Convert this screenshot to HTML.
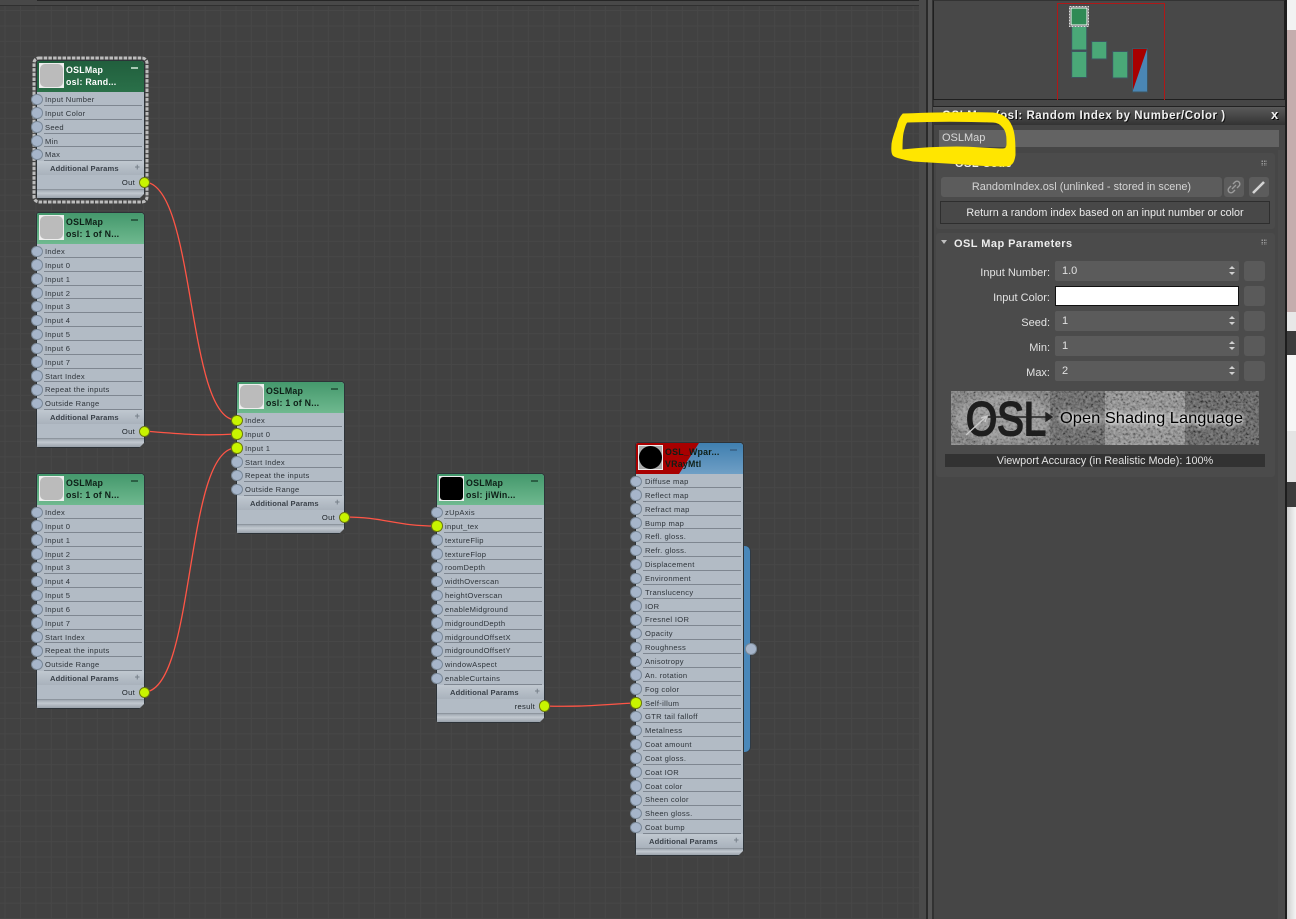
<!DOCTYPE html>
<html lang="en">
<head>
<meta charset="utf-8">
<title>OSLMap Slate Editor</title>
<style>
html,body{margin:0;padding:0;background:#414141}
body{width:1296px;height:919px;overflow:hidden;position:relative;font-family:"Liberation Sans",sans-serif}
.a{position:absolute}
#grid{left:0;top:6px;width:919px;height:913px;background-color:#414141;background-image:linear-gradient(90deg,#474747 1px,transparent 1px),linear-gradient(#474747 1px,transparent 1px);background-size:15.4px 15.4px;background-position:4.6px 4px}
.n{position:absolute;width:107px;background:#b2bbc5;box-shadow:0 0 0 1px #2d3338;border-radius:2px 3px 0 3px;font-size:7.6px;letter-spacing:.3px;color:#2f353b}
.h{height:31px;position:relative;background:linear-gradient(#44986c,#6fb98f);color:#0e1f17;font-weight:bold;font-size:8.8px;line-height:13px;letter-spacing:.25px;border-radius:2px 3px 0 0;overflow:hidden}
.h b{position:absolute;left:29px;top:3px;white-space:nowrap}
.h u{position:absolute;left:29px;top:15px;text-decoration:none;white-space:nowrap}
.h em{position:absolute;right:6px;top:6px;width:7px;height:2px;background:#2b5f44}
.sw{position:absolute;left:2px;top:2px;width:25px;height:25px;background:#eee}
.sw::after{content:"";position:absolute;left:1px;top:1px;right:1px;bottom:1px;border-radius:5px;background:#bbb}
.bk::after{background:#000;border-radius:3px}
.ci{background:#aaa;box-shadow:inset 0 0 0 1px #eee}
.ci::after{background:#000;border-radius:50%}
.r{height:13.85px;line-height:15.4px;position:relative;padding-left:8px;white-space:nowrap;box-sizing:border-box}
.r::after{content:"";position:absolute;left:7px;right:2px;bottom:0;height:1px;background:#7e8690}
.r::before{content:"";position:absolute;left:-6px;top:1.6px;width:9.5px;height:9.5px;border-radius:50%;background:#a6b5ca;border:1px solid #7a8897}
.y::before{background:#c8f400;border-color:#6a7610}
.ad{height:13.85px;line-height:15px;background:linear-gradient(#c0c8d0,#a9b2bc);font-weight:bold;letter-spacing:.12px;padding-left:13px;box-sizing:border-box;position:relative;color:#3a4149}
.ad::after{content:"+";position:absolute;right:4px;top:-1px;color:#77808a;font-size:9px}
.o{height:13.85px;line-height:15.4px;text-align:right;padding-right:9px;position:relative;box-sizing:border-box;color:#20262b}
.o::after{content:"";position:absolute;right:-6px;top:1.6px;width:9.5px;height:9.5px;border-radius:50%;background:#c8f400;border:1px solid #6a7610}
.f{background:linear-gradient(#a0a8b1 0,#c2c9d0 40%,#9aa2ab 100%);border-top:1px solid #8d959e;box-sizing:border-box;position:relative}
.f::after{content:"";position:absolute;right:-1px;bottom:-1px;border-style:solid;border-width:0 0 6px 6px;border-color:transparent transparent #414141 transparent}
.k{position:absolute;background:#5c5c5c;border-radius:3px}
.lb{position:absolute;right:246px;color:#e2e2e2;font-size:11px;line-height:20px;white-space:nowrap}
.in{position:absolute;left:1055px;width:184px;height:20px;background:#5b5b5b;border-radius:2px;color:#e0e0e0;font-size:11px;line-height:21px;padding-left:7px;box-sizing:border-box}
.in::after{content:"";position:absolute;right:4px;top:5px;border:3px solid transparent;border-bottom:3px solid #d0d0d0;border-top:0}
.in::before{content:"";position:absolute;right:4px;top:11px;border:3px solid transparent;border-top:3px solid #d0d0d0;border-bottom:0}
.bt{position:absolute;left:1244px;width:21px;height:20px;background:#5a5a5a;border-radius:3px}
.rl{position:absolute;left:936px;width:339px;background:#4b4b4b;border-radius:3px}
.dots{position:absolute;width:6px;height:6px;background-image:radial-gradient(#999 .7px,transparent .8px);background-size:2.5px 2.5px}
</style>
</head>
<body>
<div class="a" style="left:0;top:0;width:919px;height:5px;background:#484848"></div>
<div class="a" style="left:37px;top:0;width:882px;height:1px;background:#262626"></div>
<div class="a" style="left:0;top:5px;width:919px;height:1px;background:#303030"></div>
<div id="grid" class="a"></div>

<svg class="a" style="left:0;top:0" width="919" height="919" fill="none" stroke="#ff5546" stroke-width="1.3">
<path d="M144 182C196 182 186 420 236 420"/>
<path d="M144 431C180 434 200 436 236 434"/>
<path d="M144 692C196 692 184 448 236 448"/>
<path d="M344 517C385 517 395 526 436 526"/>
<path d="M544 706C585 707 595 705 635 703"/>
</svg>

<div class="a" style="left:743px;top:546px;width:7px;height:206px;background:#4a88ba;border-radius:0 5px 5px 0;box-shadow:1px 0 0 #2f3a44"></div>
<div class="a" style="left:745px;top:643px;width:9.5px;height:9.5px;border-radius:50%;background:#a6b5ca;border:1px solid #7a8897"></div>

<svg class="a" style="left:30px;top:54px" width="122" height="152" fill="none">
<rect x="4" y="4" width="113" height="144" rx="5" stroke="#bdbdbd" stroke-width="3" stroke-dasharray="3.5 1.2"/>
</svg>
<div class="n" style="left:37px;top:61px">
<div class="h" style="background:linear-gradient(#215f3d,#2a7049);color:#fff"><i class="sw"></i><b>OSLMap</b><u>osl: Rand...</u><em style="background:#a8c8b4"></em></div>
<div class="r">Input Number</div><div class="r">Input Color</div><div class="r">Seed</div><div class="r">Min</div><div class="r">Max</div>
<div class="ad">Additional Params</div><div class="o">Out</div><div class="f" style="height:9px"></div>
</div>

<div class="n" style="left:37px;top:213px">
<div class="h"><i class="sw"></i><b>OSLMap</b><u>osl: 1 of N...</u><em></em></div>
<div class="r">Index</div><div class="r">Input 0</div><div class="r">Input 1</div><div class="r">Input 2</div><div class="r">Input 3</div><div class="r">Input 4</div><div class="r">Input 5</div><div class="r">Input 6</div><div class="r">Input 7</div><div class="r">Start Index</div><div class="r">Repeat the inputs</div><div class="r">Outside Range</div>
<div class="ad">Additional Params</div><div class="o">Out</div><div class="f" style="height:9px"></div>
</div>

<div class="n" style="left:37px;top:474px">
<div class="h"><i class="sw"></i><b>OSLMap</b><u>osl: 1 of N...</u><em></em></div>
<div class="r">Index</div><div class="r">Input 0</div><div class="r">Input 1</div><div class="r">Input 2</div><div class="r">Input 3</div><div class="r">Input 4</div><div class="r">Input 5</div><div class="r">Input 6</div><div class="r">Input 7</div><div class="r">Start Index</div><div class="r">Repeat the inputs</div><div class="r">Outside Range</div>
<div class="ad">Additional Params</div><div class="o">Out</div><div class="f" style="height:9px"></div>
</div>

<div class="n" style="left:237px;top:382px">
<div class="h"><i class="sw"></i><b>OSLMap</b><u>osl: 1 of N...</u><em></em></div>
<div class="r y">Index</div><div class="r y">Input 0</div><div class="r y">Input 1</div><div class="r">Start Index</div><div class="r">Repeat the inputs</div><div class="r">Outside Range</div>
<div class="ad">Additional Params</div><div class="o">Out</div><div class="f" style="height:9px"></div>
</div>

<div class="n" style="left:437px;top:474px">
<div class="h"><i class="sw bk"></i><b>OSLMap</b><u>osl: jiWin...</u><em></em></div>
<div class="r">zUpAxis</div><div class="r y">input_tex</div><div class="r">textureFlip</div><div class="r">textureFlop</div><div class="r">roomDepth</div><div class="r">widthOverscan</div><div class="r">heightOverscan</div><div class="r">enableMidground</div><div class="r">midgroundDepth</div><div class="r">midgroundOffsetX</div><div class="r">midgroundOffsetY</div><div class="r">windowAspect</div><div class="r">enableCurtains</div>
<div class="ad">Additional Params</div><div class="o">result</div><div class="f" style="height:9px"></div>
</div>

<div class="n" style="left:636px;top:443px">
<div class="h" style="background:linear-gradient(#3f7fb0,#6f9fc5)">
<svg class="a" style="left:0;top:0" width="66" height="31"><polygon points="0,0 63,0 43,31 0,31" fill="#a80000"/></svg>
<i class="sw ci"></i><b>OSL_Wpar...</b><u>VRayMtl</u><em style="background:#3d6a90"></em></div>
<div class="r" style="padding-left:9px">Diffuse map</div><div class="r" style="padding-left:9px">Reflect map</div><div class="r" style="padding-left:9px">Refract map</div><div class="r" style="padding-left:9px">Bump map</div><div class="r" style="padding-left:9px">Refl. gloss.</div><div class="r" style="padding-left:9px">Refr. gloss.</div><div class="r" style="padding-left:9px">Displacement</div><div class="r" style="padding-left:9px">Environment</div><div class="r" style="padding-left:9px">Translucency</div><div class="r" style="padding-left:9px">IOR</div><div class="r" style="padding-left:9px">Fresnel IOR</div><div class="r" style="padding-left:9px">Opacity</div><div class="r" style="padding-left:9px">Roughness</div><div class="r" style="padding-left:9px">Anisotropy</div><div class="r" style="padding-left:9px">An. rotation</div><div class="r" style="padding-left:9px">Fog color</div><div class="r y" style="padding-left:9px">Self-illum</div><div class="r" style="padding-left:9px">GTR tail falloff</div><div class="r" style="padding-left:9px">Metalness</div><div class="r" style="padding-left:9px">Coat amount</div><div class="r" style="padding-left:9px">Coat gloss.</div><div class="r" style="padding-left:9px">Coat IOR</div><div class="r" style="padding-left:9px">Coat color</div><div class="r" style="padding-left:9px">Sheen color</div><div class="r" style="padding-left:9px">Sheen gloss.</div><div class="r" style="padding-left:9px">Coat bump</div>
<div class="ad">Additional Params</div><div class="f" style="height:7px"></div>
</div>

<!-- divider band -->
<div class="a" style="left:919px;top:0;width:7px;height:919px;background:#4a4a4a"></div>
<div class="a" style="left:926px;top:0;width:2px;height:919px;background:#2a2a2a"></div>
<div class="a" style="left:928px;top:0;width:4px;height:919px;background:#565656"></div>
<div class="a" style="left:932px;top:0;width:2px;height:919px;background:#323232"></div>

<!-- right panel -->
<div class="a" style="left:934px;top:0;width:353px;height:919px;background:#464646"></div>
<div class="a" style="left:1278px;top:150px;width:7px;height:769px;background:#4a4a4a"></div>
<div class="a" style="left:1285px;top:0;width:2px;height:919px;background:#1e1e1e"></div>

<!-- far right strip -->
<div class="a" style="left:1287px;top:0;width:9px;height:30px;background:#f2f2f2"></div>
<div class="a" style="left:1287px;top:30px;width:9px;height:282px;background:#c4adad"></div>
<div class="a" style="left:1287px;top:312px;width:9px;height:19px;background:#e8e8e8"></div>
<div class="a" style="left:1287px;top:331px;width:9px;height:24px;background:#3c3c3c"></div>
<div class="a" style="left:1287px;top:355px;width:9px;height:76px;background:#f6f6f6"></div>
<div class="a" style="left:1287px;top:431px;width:9px;height:51px;background:#e4e4e4"></div>
<div class="a" style="left:1287px;top:482px;width:9px;height:25px;background:#3c3c3c"></div>
<div class="a" style="left:1287px;top:507px;width:9px;height:412px;background:linear-gradient(90deg,#cfcfcf,#f4f4f4)"></div>

<!-- navigator -->
<div class="a" style="left:933px;top:0;width:352px;height:100px;box-sizing:border-box;background:#484848;border:1px solid #1f1f1f;border-top:1px solid #333"></div>
<svg class="a" style="left:933px;top:0" width="352" height="100">
<rect x="124.5" y="3.5" width="107" height="100" fill="none" stroke="#b01818"/>
<rect x="138.7" y="26.5" width="15" height="23.5" fill="#4aa878" stroke="#3e5560"/>
<rect x="138.7" y="51.5" width="15" height="26" fill="#4aa878" stroke="#3e5560"/>
<rect x="158.7" y="41.5" width="15" height="17.5" fill="#4aa878" stroke="#3e5560"/>
<rect x="179.7" y="51.5" width="15" height="26.5" fill="#4aa878" stroke="#3e5560"/>
<rect x="199.5" y="48.5" width="15" height="43.5" fill="#4a86b4" stroke="#3e5560"/>
<polygon points="200,49 214,49 200,90" fill="#a80000"/>
<rect x="138" y="8" width="16" height="17" fill="#2f8a55" stroke="#fff"/>
<rect x="136.5" y="6.5" width="19" height="20" fill="none" stroke="#ddd" stroke-dasharray="2 1"/>
</svg>

<!-- title -->
<div class="a" style="left:933px;top:106px;width:352px;height:19px;background:linear-gradient(#5c5c5c,#333);box-shadow:inset 0 1px 0 #222"></div>
<div class="a" style="left:942px;top:109px;font-size:11.5px;line-height:15px;font-weight:bold;color:#f0f0f0;letter-spacing:.55px;white-space:nowrap;text-shadow:1px 1px 0 #111">OSLMap (osl: Random Index by Number/Color )</div>
<div class="a" style="left:1271px;top:108px;font-size:13px;line-height:14px;font-weight:bold;color:#eee;text-shadow:1px 1px 0 #000">x</div>
<div class="a" style="left:939px;top:130px;width:340px;height:17px;background:#636363;color:#d8d8d8;font-size:11px;line-height:17px;padding-left:3px;box-sizing:border-box">OSLMap</div>

<!-- OSL code rollout -->
<div class="rl" style="top:153px;height:76px"></div>
<div class="a" style="left:955px;top:157px;font-size:11px;line-height:14px;font-weight:bold;color:#eee;letter-spacing:.5px">OSL Code</div>
<div class="dots" style="left:1261px;top:160px"></div>
<div class="k" style="left:941px;top:177px;width:281px;height:20px;color:#d4d4d4;font-size:10.9px;line-height:20px;text-align:center">RandomIndex.osl (unlinked - stored in scene)</div>
<div class="k" style="left:1224px;top:177px;width:20px;height:20px"></div>
<svg class="a" style="left:1224px;top:177px" width="20" height="20" fill="none" stroke="#9c9c9c" stroke-width="1.4"><path d="M9 7l2-2a2.5 2.5 0 0 1 4 4l-2 2M11 13l-2 2a2.5 2.5 0 0 1-4-4l2-2M8 12l4-4"/></svg>
<div class="k" style="left:1249px;top:177px;width:20px;height:20px"></div>
<svg class="a" style="left:1249px;top:177px" width="20" height="20" fill="none" stroke="#d4d4d4" stroke-width="2.6"><path d="M4 16L15 5"/></svg>
<div class="a" style="left:940px;top:201px;width:330px;height:23px;box-sizing:border-box;border:1px solid #2e2e2e;background:#484848;color:#ececec;font-size:10.8px;line-height:22px;text-align:center">Return a random index based on an input number or color</div>

<!-- params rollout -->
<div class="rl" style="top:233px;height:244px"></div>
<div class="a" style="left:941px;top:240px;border:3px solid transparent;border-top:4px solid #c0c0c0;border-bottom:0"></div>
<div class="a" style="left:954px;top:237px;font-size:11px;line-height:14px;font-weight:bold;color:#ededed;letter-spacing:.45px;white-space:nowrap">OSL Map Parameters</div>
<div class="dots" style="left:1261px;top:239px"></div>

<div class="lb" style="top:263px">Input Number:</div><div class="in" style="top:261px">1.0</div><div class="bt" style="top:261px"></div>
<div class="lb" style="top:288px">Input Color:</div><div class="a" style="left:1055px;top:286px;width:184px;height:20px;box-sizing:border-box;background:#fff;border:1px solid #111"></div><div class="bt" style="top:286px"></div>
<div class="lb" style="top:313px">Seed:</div><div class="in" style="top:311px">1</div><div class="bt" style="top:311px"></div>
<div class="lb" style="top:338px">Min:</div><div class="in" style="top:336px">1</div><div class="bt" style="top:336px"></div>
<div class="lb" style="top:363px">Max:</div><div class="in" style="top:361px">2</div><div class="bt" style="top:361px"></div>

<!-- OSL banner -->
<svg class="a" style="left:951px;top:391px" width="308" height="54">
<defs>
<filter id="nz" x="0" y="0" width="100%" height="100%"><feTurbulence type="fractalNoise" baseFrequency="0.4" numOctaves="2" seed="7"/><feColorMatrix values="2 0 0 0 -0.5 2 0 0 0 -0.5 2 0 0 0 -0.5 0 0 0 0 0.32"/></filter>
<filter id="gl" x="-10%" y="-40%" width="120%" height="180%"><feGaussianBlur stdDeviation="2"/></filter>
</defs>
<rect width="99" height="54" fill="#6c6c6c"/>
<rect x="99" width="55" height="54" fill="#4e4e4e"/>
<rect x="154" width="80" height="54" fill="#828282"/>
<rect x="234" width="74" height="54" fill="#484848"/>
<rect width="308" height="54" filter="url(#nz)"/>
<ellipse cx="52" cy="27" rx="48" ry="24" fill="#ccc" opacity=".3" filter="url(#gl)"/>
<text x="15" y="44" font-family="Liberation Sans" font-size="47" textLength="80" lengthAdjust="spacingAndGlyphs" fill="#1e1e1e" stroke="#1e1e1e" stroke-width="2">OSL</text>
<path d="M37 26H100M95 22l6 4-6 4z" stroke="#222" stroke-width="1.4" fill="#222"/>
<path d="M15 44L36 25M30 27l6-2-2 6" stroke="#ccc" stroke-width="1.3" fill="none"/>
<text x="109" y="32" font-family="Liberation Sans" font-size="16" textLength="183" lengthAdjust="spacingAndGlyphs" fill="#eee" stroke="#eee" stroke-width="2" opacity=".8" filter="url(#gl)">Open Shading Language</text>
<text x="109" y="32" font-family="Liberation Sans" font-size="16" textLength="183" lengthAdjust="spacingAndGlyphs" fill="#000">Open Shading Language</text>
</svg>

<div class="a" style="left:945px;top:454px;width:320px;height:13px;background:#323232;color:#e2e2e2;font-size:10.9px;line-height:14px;text-align:center;white-space:nowrap">Viewport Accuracy (in Realistic Mode): 100%</div>

<!-- yellow marker -->
<svg class="a" style="left:880px;top:100px" width="150" height="80">
<path fill="#ffe600" fill-rule="evenodd" stroke="#ffe600" stroke-width="1" stroke-linejoin="round" d="M23 14C50 13 85 12 113 13C122 14 128 18 131 25C135 32 135 45 135 55C134 62 132 66 126 66C105 66 95 65 83 64L33 61C24 59 16 58 13 55C11 52 12 47 12 44C13 37 15 33 17 27C18 22 20 17 23 14ZM27 22C25 24 24 29 23 33C22 38 22 45 22 50C40 48 60 47 77 47C95 47 110 49 123 49C126 49 127 47 127 44C127 38 127 34 125 30C122 25 118 22 113 22C85 21 55 21 27 22Z"/>
</svg>
</body>
</html>
